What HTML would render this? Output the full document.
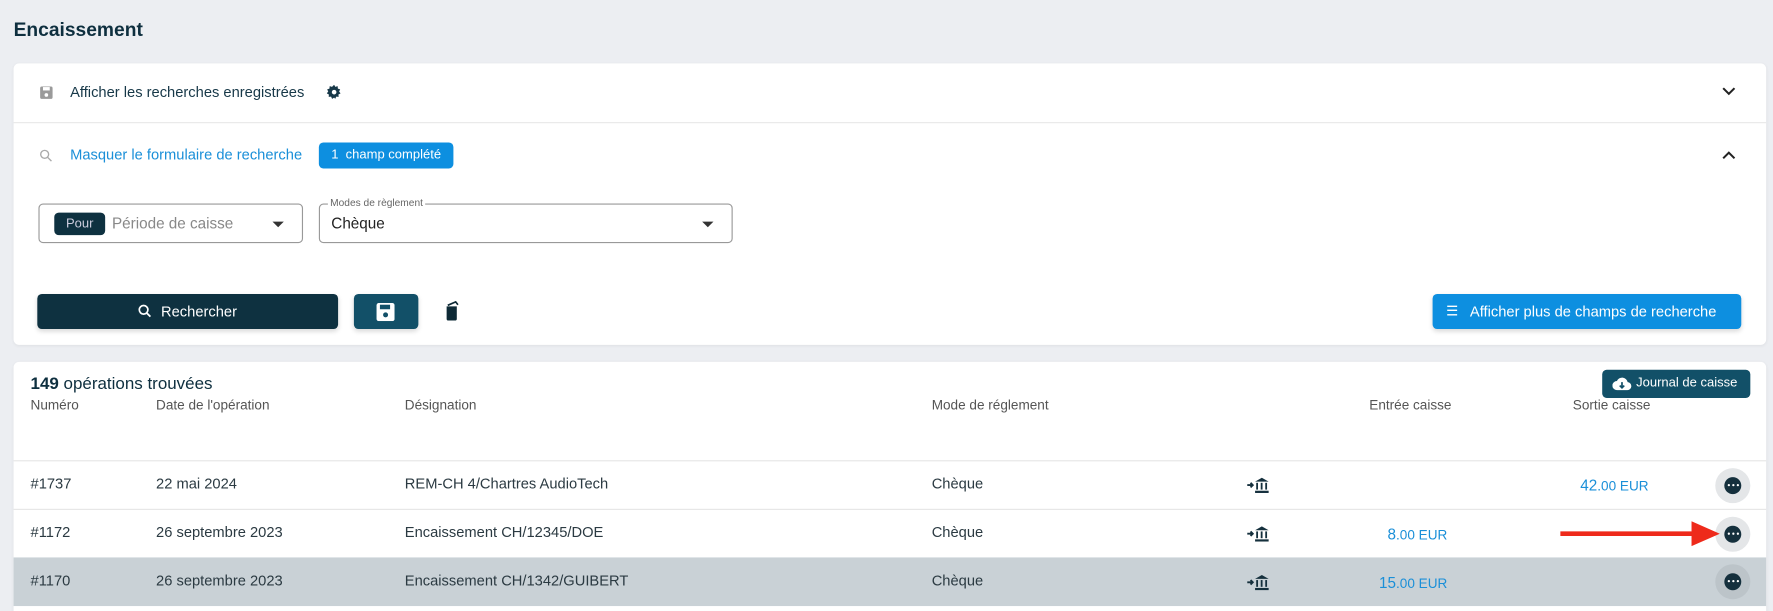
<!DOCTYPE html>
<html><head><meta charset="utf-8"><style>
*{box-sizing:border-box;margin:0;padding:0}
html,body{width:1773px;height:611px;overflow:hidden}
body{background:#eceef2;font-family:"Liberation Sans",sans-serif;color:#1f2d36;position:relative}
#w{position:absolute;left:0;top:0;width:1568px;height:541px;transform:scale(1.1307);transform-origin:0 0;overflow:hidden}
.a{position:absolute}
.card{position:absolute;background:#fff;border-radius:5px;box-shadow:0 1px 3px rgba(0,0,0,.06)}
.t{font-size:13px;color:#2b3a42}
.h{font-size:12px;color:#555}
.blue{color:#1a8fd8}
.dots{position:absolute;width:31px;height:31px;border-radius:50%;background:#e4e6e8}
.dots i{position:absolute;left:8px;top:8px;width:15px;height:15px;border-radius:50%;background:#15303d}
.dots i:after{content:"";position:absolute;left:3px;top:6px;width:2px;height:2px;background:#fff;box-shadow:4px 0 #fff,8px 0 #fff;border-radius:1px}
</style></head><body><div id="w">
<div class="a" style="left:12px;top:17px;font-size:17px;font-weight:bold;color:#0e2f3f">Encaissement</div>

<div class="card" style="left:12px;top:56px;width:1550px;height:249px">
 <svg class="a" style="left:23px;top:20px" width="12" height="12" viewBox="0 0 12 12"><rect x="0.5" y="0.5" width="11" height="11" rx="1.5" fill="#9a9a9a"/><rect x="3" y="1" width="6" height="3" fill="#fff"/><circle cx="6" cy="8" r="1.6" fill="#fff"/></svg>
 <div class="a" style="left:50px;top:18px;font-size:13px;color:#173848">Afficher les recherches enregistrées</div>
 <svg class="a" style="left:277px;top:19px" width="13" height="13" viewBox="0 0 16 16"><path fill="#173848" d="M8 0l1.3 2.2 2.5-.7.3 2.6 2.5.9-1.2 2.3 1.6 2-2.3 1.2.2 2.6-2.6-.2-1.1 2.4L8 14l-2.2 1.3-1.1-2.4-2.6.2.2-2.6L0 9.3l1.6-2L.4 5l2.5-.9.3-2.6 2.5.7z"/><circle cx="8" cy="8" r="2.5" fill="#fff"/></svg>
 <svg class="a" style="left:1511px;top:21px" width="12" height="8" viewBox="0 0 12 8"><path d="M1 1l5 5 5-5" stroke="#222" stroke-width="1.8" fill="none"/></svg>
 <div class="a" style="left:0;top:52px;width:1550px;height:1px;background:#e8e8e8"></div>
 <svg class="a" style="left:23px;top:76px" width="11" height="11" viewBox="0 0 11 11"><circle cx="4.5" cy="4.5" r="3.5" stroke="#aaa" stroke-width="1.2" fill="none"/><path d="M7 7l3.5 3.5" stroke="#aaa" stroke-width="1.2"/></svg>
 <div class="a blue" style="left:50px;top:73px;font-size:13px">Masquer le formulaire de recherche</div>
 <div class="a" style="left:270px;top:70px;width:119px;height:23px;background:#0d8fe0;border-radius:4px;color:#fff;font-size:11.5px;line-height:23px;text-align:center">1&nbsp; champ complété</div>
 <svg class="a" style="left:1511px;top:77px" width="12" height="8" viewBox="0 0 12 8"><path d="M1 7l5-5 5 5" stroke="#222" stroke-width="1.8" fill="none"/></svg>

 <div class="a" style="left:22px;top:124px;width:234px;height:35px;border:1px solid #999;border-radius:4px"></div>
 <div class="a" style="left:36px;top:132px;width:45px;height:20px;background:#0e3140;border-radius:4px;color:#ccd;font-size:11.5px;line-height:20px;text-align:center">Pour</div>
 <div class="a" style="left:87px;top:134px;font-size:13.5px;color:#888">Période de caisse</div>
 <div class="a" style="left:229px;top:140px;border-left:5px solid transparent;border-right:5px solid transparent;border-top:5px solid #333"></div>
 <div class="a" style="left:270px;top:124px;width:366px;height:35px;border:1px solid #999;border-radius:4px"></div>
 <div class="a" style="left:278px;top:118px;font-size:9px;color:#666;background:#fff;padding:0 2px">Modes de règlement</div>
 <div class="a" style="left:281px;top:134px;font-size:13.5px;color:#222">Chèque</div>
 <div class="a" style="left:609px;top:140px;border-left:5px solid transparent;border-right:5px solid transparent;border-top:5px solid #333"></div>

 <div class="a" style="left:21px;top:204px;width:266px;height:31px;background:#0e3140;border-radius:4px;color:#fff;font-size:13px;line-height:31px;text-align:center;box-shadow:0 2px 4px rgba(0,0,0,.15)"><svg width="12" height="12" viewBox="0 0 12 12" style="vertical-align:-1px;margin-right:8px"><circle cx="5" cy="5" r="3.8" stroke="#fff" stroke-width="1.5" fill="none"/><path d="M8 8l3 3" stroke="#fff" stroke-width="1.6"/></svg>Rechercher</div>
 <div class="a" style="left:301px;top:204px;width:57px;height:31px;background:#125068;border-radius:4px;box-shadow:0 2px 4px rgba(0,0,0,.15)"><svg class="a" style="left:20px;top:8px" width="16" height="16" viewBox="0 0 16 16"><rect x="0" y="0" width="16" height="16" rx="2" fill="#fff"/><rect x="3" y="1.5" width="9" height="4" fill="#125068"/><circle cx="8" cy="10.5" r="2.2" fill="#125068"/></svg></div>
 <svg class="a" style="left:381px;top:210px" width="14" height="18" viewBox="0 0 14 18"><path d="M2 5h9v11a1.5 1.5 0 0 1-1.5 1.5h-6A1.5 1.5 0 0 1 2 16z" fill="#0e2a36"/><path d="M3 4l7-3 2 2.5" stroke="#0e2a36" stroke-width="1.5" fill="none"/></svg>
 <div class="a" style="left:1255px;top:204px;width:273px;height:31px;background:#0d8fe0;border-radius:4px;color:#fff;font-size:13px;line-height:31px;box-shadow:0 2px 4px rgba(0,0,0,.15)"><span style="position:absolute;left:12px;top:0;font-size:12px">☰</span><span style="position:absolute;left:33px">Afficher plus de champs de recherche</span></div>
</div>

<div class="card" style="left:12px;top:320px;width:1550px;height:222px;border-radius:5px 5px 0 0">
 <div class="a" style="left:15px;top:11px;font-size:15px;color:#0e2f3f"><b>149</b> opérations trouvées</div>
 <div class="a" style="left:1405px;top:7px;width:131px;height:25px;background:#125068;border-radius:4px;color:#fff;font-size:11.5px;line-height:25px"><svg class="a" style="left:9px;top:6px" width="17" height="13" viewBox="0 0 17 13"><path d="M4 12a4 4 0 0 1 0-8 5 5 0 0 1 9.5 1A3.5 3.5 0 0 1 13 12z" fill="#fff"/><path d="M8.5 5v5M6.5 8l2 2 2-2" stroke="#125068" stroke-width="1.5" fill="none"/></svg><span style="position:absolute;left:30px">Journal de caisse</span></div>
 <div class="a h" style="left:15px;top:31px">Numéro</div>
 <div class="a h" style="left:126px;top:31px">Date de l'opération</div>
 <div class="a h" style="left:346px;top:31px">Désignation</div>
 <div class="a h" style="left:812px;top:31px">Mode de réglement</div>
 <div class="a h" style="left:1199px;top:31px">Entrée caisse</div>
 <div class="a h" style="left:1379px;top:31px">Sortie caisse</div>
 <div class="a" style="left:0;top:87px;width:1550px;height:1px;background:#e6e6e6"></div>
 <div class="a" style="left:0;top:130px;width:1550px;height:1px;background:#e6e6e6"></div>
 <div class="a" style="left:0;top:173px;width:1550px;height:43px;background:#c9d1d6"></div>

 <div class="a t" style="left:15px;top:100px">#1737</div>
 <div class="a t" style="left:126px;top:100px">22 mai 2024</div>
 <div class="a t" style="left:346px;top:100px">REM-CH 4/Chartres AudioTech</div>
 <div class="a t" style="left:812px;top:100px">Chèque</div>
 <div class="a blue" style="left:1360px;top:102px;width:86px;text-align:right;font-size:13.5px">42<span style="font-size:12px">.00 EUR</span></div>
 <div class="dots" style="left:1505px;top:94px"><i></i></div>

 <div class="a t" style="left:15px;top:143px">#1172</div>
 <div class="a t" style="left:126px;top:143px">26 septembre 2023</div>
 <div class="a t" style="left:346px;top:143px">Encaissement CH/12345/DOE</div>
 <div class="a t" style="left:812px;top:143px">Chèque</div>
 <div class="a blue" style="left:1180px;top:145px;width:88px;text-align:right;font-size:13.5px">8<span style="font-size:12px">.00 EUR</span></div>
 <div class="dots" style="left:1505px;top:137px"><i></i></div>

 <div class="a t" style="left:15px;top:186px">#1170</div>
 <div class="a t" style="left:126px;top:186px">26 septembre 2023</div>
 <div class="a t" style="left:346px;top:186px">Encaissement CH/1342/GUIBERT</div>
 <div class="a t" style="left:812px;top:186px">Chèque</div>
 <div class="a blue" style="left:1180px;top:188px;width:88px;text-align:right;font-size:13.5px">15<span style="font-size:12px">.00 EUR</span></div>
 <div class="dots" style="left:1505px;top:179px;background:#bcc4c9"><i></i></div>

 <svg class="a" style="left:1091px;top:102px" width="20" height="14" viewBox="0 0 20 14"><path d="M0 7h4M3 5l2 2-2 2" stroke="#15303d" stroke-width="1.6" fill="none"/><path d="M7 4l6-3.5 6 3.5z" fill="#15303d"/><rect x="8" y="5" width="1.6" height="6" fill="#15303d"/><rect x="12" y="5" width="1.6" height="6" fill="#15303d"/><rect x="16" y="5" width="1.6" height="6" fill="#15303d"/><rect x="7" y="12" width="12" height="2" fill="#15303d"/></svg>
 <svg class="a" style="left:1091px;top:145px" width="20" height="14" viewBox="0 0 20 14"><path d="M0 7h4M3 5l2 2-2 2" stroke="#15303d" stroke-width="1.6" fill="none"/><path d="M7 4l6-3.5 6 3.5z" fill="#15303d"/><rect x="8" y="5" width="1.6" height="6" fill="#15303d"/><rect x="12" y="5" width="1.6" height="6" fill="#15303d"/><rect x="16" y="5" width="1.6" height="6" fill="#15303d"/><rect x="7" y="12" width="12" height="2" fill="#15303d"/></svg>
 <svg class="a" style="left:1091px;top:188px" width="20" height="14" viewBox="0 0 20 14"><path d="M0 7h4M3 5l2 2-2 2" stroke="#15303d" stroke-width="1.6" fill="none"/><path d="M7 4l6-3.5 6 3.5z" fill="#15303d"/><rect x="8" y="5" width="1.6" height="6" fill="#15303d"/><rect x="12" y="5" width="1.6" height="6" fill="#15303d"/><rect x="16" y="5" width="1.6" height="6" fill="#15303d"/><rect x="7" y="12" width="12" height="2" fill="#15303d"/></svg>
</div>
<svg class="a" style="left:1378px;top:460px" width="145" height="24" viewBox="0 0 145 24"><path d="M2 12h118" stroke="#ee2a1b" stroke-width="4"/><path d="M118 1l25 11-25 11z" fill="#ee2a1b"/></svg>
</div></body></html>
